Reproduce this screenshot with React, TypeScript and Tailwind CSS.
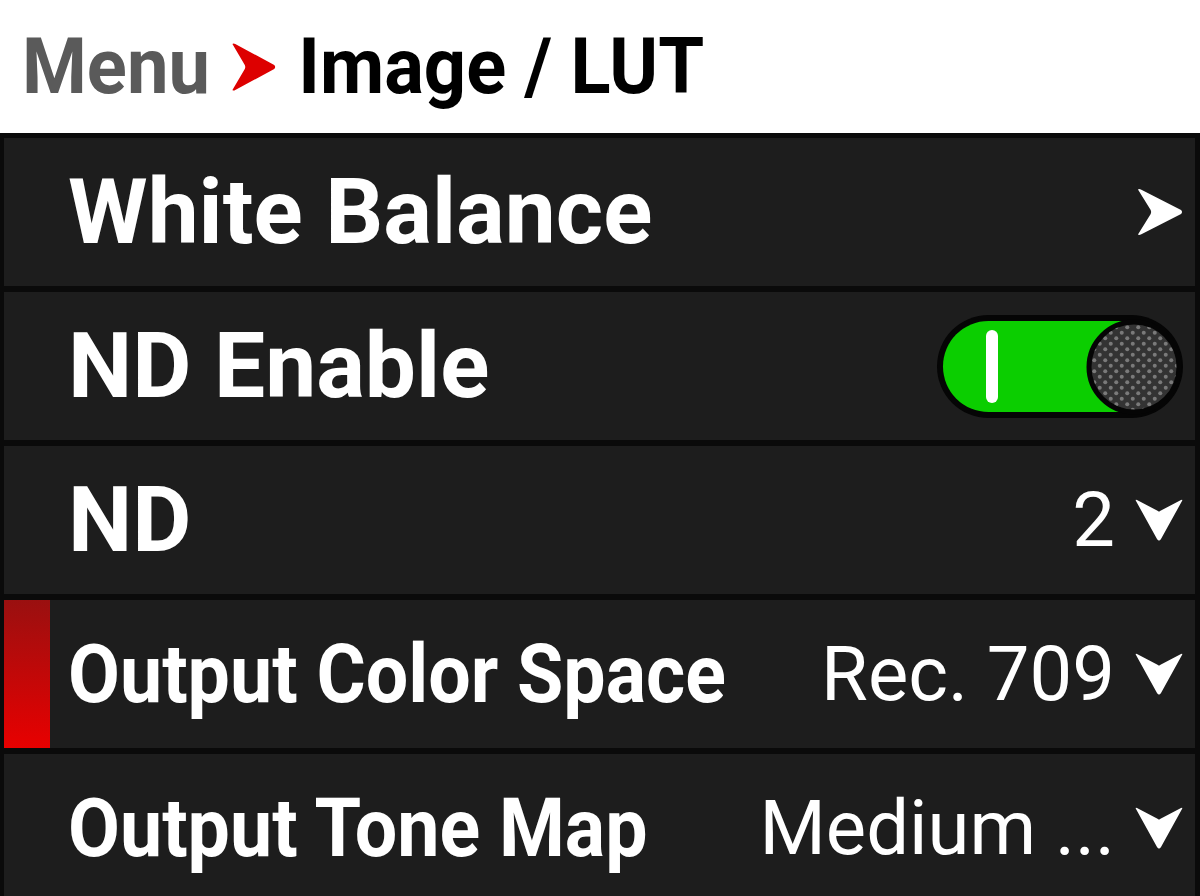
import type { ReactNode } from "react";

const font = { fontFamily: "Roboto, 'Liberation Sans', sans-serif" };

function RightArrow({ className }: { className?: string }) {
  return (
    <svg viewBox="0 0 48 48" className={className} aria-hidden="true">
      <path
        d="M2 1 Q3 0 5 1 L46 22 Q48 24 46 26 L5 47 Q3 48 2 47 L15 26 Q16 24 15 22 Z"
        fill="currentColor"
      />
    </svg>
  );
}

function DownArrow({ className }: { className?: string }) {
  return (
    <svg viewBox="0 0 48 42" className={className} aria-hidden="true">
      <path
        d="M1 2 Q0 0 2 1 L23 12 Q24 13 25 12 L46 1 Q48 0 47 2 L26 40 Q24 43 22 40 Z"
        fill="currentColor"
      />
    </svg>
  );
}

function Knob() {
  return (
    <svg viewBox="0 0 96 96" className="h-full w-full" aria-hidden="true">
      <defs>
        <pattern id="dots" width="11" height="11" patternUnits="userSpaceOnUse">
          <rect width="11" height="11" fill="#333333" />
          <circle cx="2.75" cy="2.75" r="2" fill="#7a7a7a" />
          <circle cx="8.25" cy="8.25" r="2" fill="#7a7a7a" />
        </pattern>
      </defs>
      <circle cx="48" cy="48" r="45" fill="url(#dots)" stroke="#050505" strokeWidth="5" />
    </svg>
  );
}

function Toggle() {
  return (
    <div className="relative h-[103px] w-[246px] rounded-full bg-[#050505] p-[6px]">
      <div className="h-full w-full rounded-full bg-[#0bce00]" />
      <div className="absolute left-[49px] top-[15px] h-[73px] w-[12px] rounded-full bg-white" />
      <div className="absolute right-[1px] top-[4px] h-[96px] w-[96px]">
        <Knob />
      </div>
    </div>
  );
}

function Row({
  label,
  right,
  narrow = false,
  active = false,
}: {
  label: string;
  right: ReactNode;
  narrow?: boolean;
  active?: boolean;
}) {
  return (
    <div className="flex h-[148px] shrink-0 items-center bg-[#1d1d1d]">
      <div
        className={
          active
            ? "h-full w-[46px] shrink-0 bg-[linear-gradient(to_bottom,#9a1010,#e80000)]"
            : "h-full w-[46px] shrink-0"
        }
      />
      <div className="flex min-w-0 flex-1 items-center justify-between pl-[18px] pr-[12px]">
        {narrow ? (
          <span className="origin-left scale-x-[0.93] whitespace-nowrap text-[81px] font-bold leading-none text-white">
            {label}
          </span>
        ) : (
          <span className="whitespace-nowrap text-[91px] font-bold leading-none text-white">{label}</span>
        )}
        {right}
      </div>
    </div>
  );
}

function Value({ text }: { text: string }) {
  return (
    <div className="flex items-center gap-[20px]">
      <span className="whitespace-nowrap text-[76px] font-normal leading-none text-white">{text}</span>
      <DownArrow className="h-[42px] w-[48px] text-white" />
    </div>
  );
}

export default function App() {
  return (
    <div className="h-[896px] w-[1200px] overflow-hidden bg-[#0a0a0a]" style={font}>
      <header className="flex h-[133px] items-center bg-white pl-[22px]">
        <div className="flex origin-left scale-x-[0.95] items-center">
          <span className="text-[78px] font-bold leading-none text-[#5a5a5a]">Menu</span>
          <RightArrow className="ml-[21px] h-[48px] w-[49px] text-[#dd0000]" />
          <span className="ml-[23px] text-[78px] font-bold leading-none text-black">Image / LUT</span>
        </div>
      </header>
      <div className="flex flex-col gap-[6px] pl-[4px] pr-[5px] pt-[5px]">
        <Row label="White Balance" right={<RightArrow className="h-[48px] w-[47px] text-white" />} />
        <Row label="ND Enable" right={<Toggle />} />
        <Row label="ND" right={<Value text="2" />} />
        <Row label="Output Color Space" narrow active right={<Value text="Rec. 709" />} />
        <Row label="Output Tone Map" narrow right={<Value text="Medium ..." />} />
      </div>
    </div>
  );
}
